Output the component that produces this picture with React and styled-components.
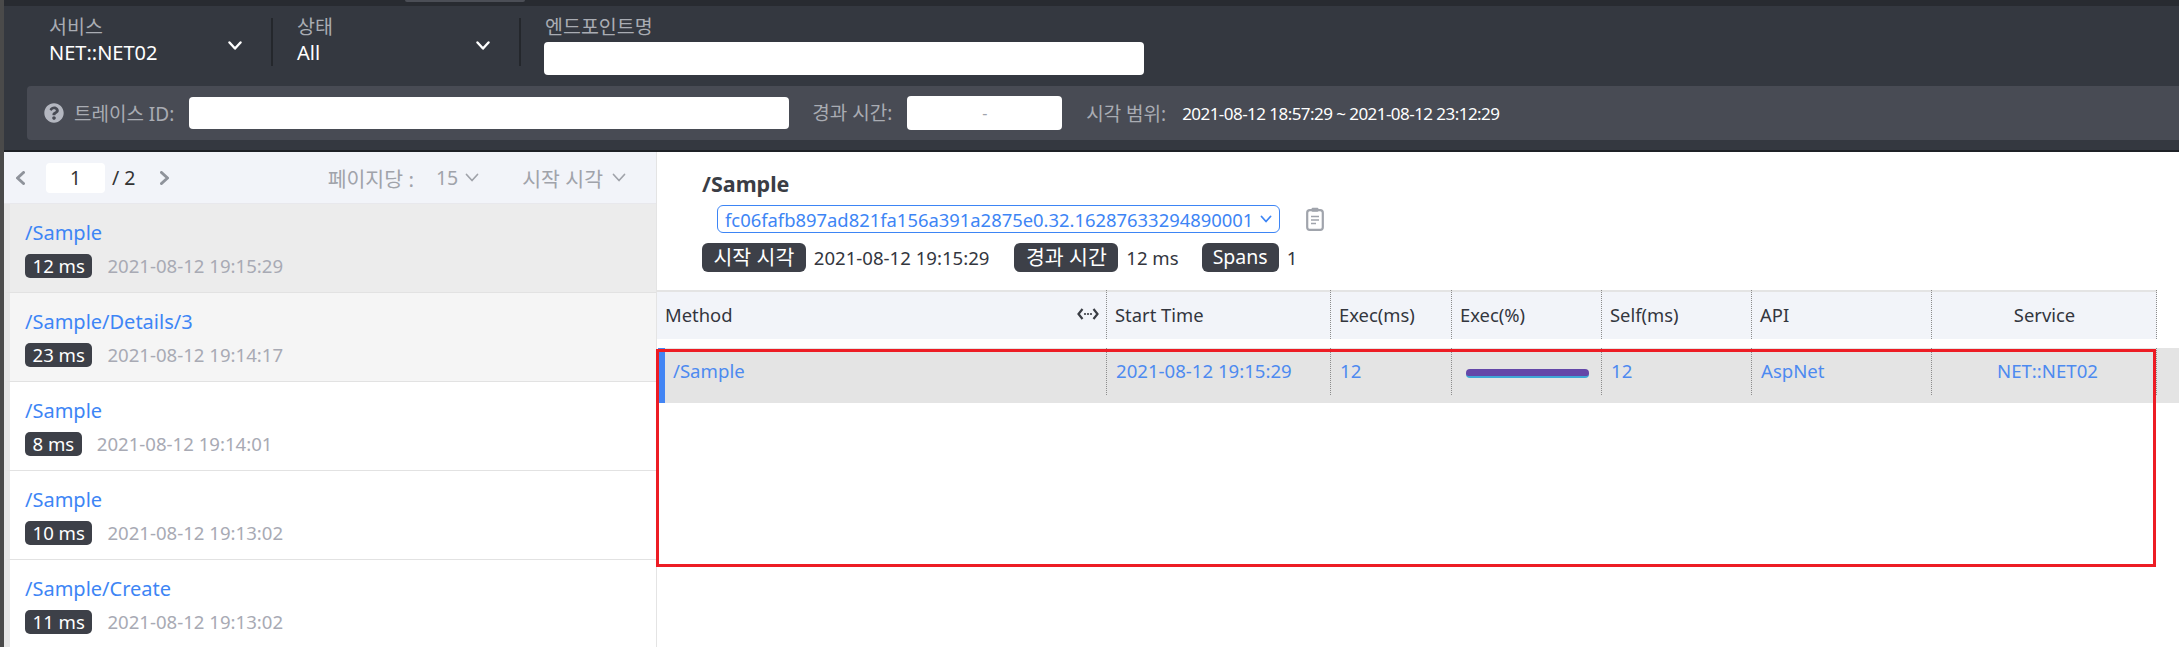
import React from 'react';
import styled, { createGlobalStyle } from 'styled-components';
import { FaQuestionCircle } from 'react-icons/fa';

const GlobalStyle = createGlobalStyle`
  * { box-sizing: border-box; }
  body {
    margin: 0;
    background: #fff;
    font-family: "Noto Sans", "Noto Sans CJK KR", sans-serif;
  }
`;

const traces = [
  { path: '/Sample', ms: '12 ms', time: '2021-08-12 19:15:29', tone: 'active' },
  { path: '/Sample/Details/3', ms: '23 ms', time: '2021-08-12 19:14:17', tone: 'hover' },
  { path: '/Sample', ms: '8 ms', time: '2021-08-12 19:14:01' },
  { path: '/Sample', ms: '10 ms', time: '2021-08-12 19:13:02' },
  { path: '/Sample/Create', ms: '11 ms', time: '2021-08-12 19:13:02' },
];

const Chevron = ({ dir = 'down', w = 14, h = 9, weight = 2.4, color = 'currentColor' }) => {
  const points = {
    down: `1.5,1.5 ${w / 2},${h - 1.5} ${w - 1.5},1.5`,
    left: `${w - 1.5},1.5 1.5,${h / 2} ${w - 1.5},${h - 1.5}`,
    right: `1.5,1.5 ${w - 1.5},${h / 2} 1.5,${h - 1.5}`,
  }[dir];
  return (
    <svg width={w} height={h} viewBox={`0 0 ${w} ${h}`} fill="none">
      <polyline points={points} stroke={color} strokeWidth={weight} strokeLinecap="round" strokeLinejoin="round" />
    </svg>
  );
};

const ClipboardIcon = () => (
  <svg width="18" height="24" viewBox="0 0 18 24" fill="none">
    <rect x="1.2" y="3.2" width="15.6" height="19.6" rx="2.6" stroke="#a0a4ac" strokeWidth="2.2" />
    <rect x="5.5" y="0.8" width="7" height="4" rx="1.2" fill="#a0a4ac" />
    <path d="M5 9.5h8M5 13h8M5 16.5h5" stroke="#a0a4ac" strokeWidth="1.5" />
  </svg>
);

const ResizeIcon = () => (
  <svg width="22" height="14" viewBox="0 0 22 14" fill="none">
    <polyline points="5.5,2 1.5,7 5.5,12" stroke="#3a3d44" strokeWidth="2.2" />
    <polyline points="16.5,2 20.5,7 16.5,12" stroke="#3a3d44" strokeWidth="2.2" />
    <circle cx="8" cy="7" r="1.1" fill="#3a3d44" />
    <circle cx="11" cy="7" r="1.1" fill="#3a3d44" />
    <circle cx="14" cy="7" r="1.1" fill="#3a3d44" />
  </svg>
);

const App = () => (
  <>
    <GlobalStyle />
    <Page>
      <TopStrip><TopTab /></TopStrip>
      <Header>
        <FilterRow>
          <SelectField>
            <div>
              <FieldLabel>서비스</FieldLabel>
              <FieldValue>NET::NET02</FieldValue>
            </div>
            <Chevron />
          </SelectField>
          <SelectField>
            <div>
              <FieldLabel>상태</FieldLabel>
              <FieldValue>All</FieldValue>
            </div>
            <Chevron />
          </SelectField>
          <EndpointField>
            <EndpointLabel>엔드포인트명</EndpointLabel>
            <EndpointInput />
          </EndpointField>
        </FilterRow>
        <Toolbar>
          <HelpIcon><FaQuestionCircle size={20} /></HelpIcon>
          <ToolLabel $gap={10}>트레이스 ID:</ToolLabel>
          <TraceInput />
          <ToolLabel $gap={23} $raised>경과 시간:</ToolLabel>
          <ElapsedInput>-</ElapsedInput>
          <ToolLabel $gap={24}>시각 범위:</ToolLabel>
          <RangeValue>2021-08-12 18:57:29 ~ 2021-08-12 23:12:29</RangeValue>
        </Toolbar>
      </Header>
      <Body>
        <ListPane>
          <ListToolbar>
            <PageNav>
              <Chevron dir="left" w={9} h={14} weight={3} color="#8f939b" />
              <PageInput>1</PageInput>
              <PageTotal>/ 2</PageTotal>
              <Chevron dir="right" w={9} h={14} weight={3} color="#8f939b" />
            </PageNav>
            <SortGroup>
              <SortText>페이지당 :</SortText>
              <SortCount>15</SortCount>
              <Chevron w={14} h={9} weight={1.7} />
              <SortName>시작 시각</SortName>
              <Chevron w={14} h={9} weight={1.7} />
            </SortGroup>
          </ListToolbar>
          {traces.map((trace, i) => (
            <TraceItem key={i} $tone={trace.tone}>
              <TraceLink>{trace.path}</TraceLink>
              <TraceMeta>
                <MsBadge>{trace.ms}</MsBadge>
                <TraceTime>{trace.time}</TraceTime>
              </TraceMeta>
            </TraceItem>
          ))}
        </ListPane>
        <DetailPane>
          <DetailHead>
            <DetailTitle>/Sample</DetailTitle>
            <TraceRow>
              <TraceSelect>
                <span>fc06fafb897ad821fa156a391a2875e0.32.16287633294890001</span>
                <Chevron w={12} h={8} weight={1.8} />
              </TraceSelect>
              <ClipboardIcon />
            </TraceRow>
            <MetaRow>
              <MetaBadge $size={20.5} $pad={11.5}>시작 시각</MetaBadge>
              <MetaValue $gap={25}>2021-08-12 19:15:29</MetaValue>
              <MetaBadge $size={20.5} $pad={11.5}>경과 시간</MetaBadge>
              <MetaValue $gap={23}>12 ms</MetaValue>
              <MetaBadge>Spans</MetaBadge>
              <MetaValue>1</MetaValue>
            </MetaRow>
          </DetailHead>
          <HeadRow>
            <HeadCell>Method<ResizeHandle><ResizeIcon /></ResizeHandle></HeadCell>
            <HeadCell>Start Time</HeadCell>
            <HeadCell>Exec(ms)</HeadCell>
            <HeadCell>Exec(%)</HeadCell>
            <HeadCell>Self(ms)</HeadCell>
            <HeadCell>API</HeadCell>
            <HeadCell $center>Service</HeadCell>
          </HeadRow>
          <DataRow>
            <DataGrid>
              <DataCell $pad={7}>/Sample</DataCell>
              <DataCell $pad={9}>2021-08-12 19:15:29</DataCell>
              <DataCell $pad={9}>12</DataCell>
              <DataCell $pad={14}>
                <ExecBar />
              </DataCell>
              <DataCell $pad={9}>12</DataCell>
              <DataCell $pad={9}>AspNet</DataCell>
              <DataCell $center>NET::NET02</DataCell>
            </DataGrid>
          </DataRow>
          <Highlight />
        </DetailPane>
      </Body>
    </Page>
  </>
);

const Page = styled.div`
  width: 2179px;
  height: 647px;
  overflow: hidden;
  border-left: 4px solid #4a4a4a;
  background: #fff;
`;

const TopStrip = styled.div`
  height: 6px;
  background: #282b31;
`;

const TopTab = styled.div`
  width: 120px;
  height: 2px;
  margin-left: 401px;
  background: #4b4e56;
  border-radius: 0 0 3px 3px;
`;

const Header = styled.div`
  height: 146px;
  padding-top: 12px;
  background: #343840;
  border-bottom: 2px solid #1e2126;
`;

const FilterRow = styled.div`
  display: flex;
  height: 48px;
  padding-left: 45px;
`;

const SelectField = styled.div`
  display: flex;
  justify-content: space-between;
  align-items: flex-start;
  width: 248px;
  padding-right: 55px;
  color: #fff;
  position: relative;
  svg { margin-top: 23px; }
  &::after {
    content: '';
    position: absolute;
    right: 24px;
    top: 0;
    width: 2px;
    height: 48px;
    background: #24272c;
  }
`;

const FieldLabel = styled.div`
  font-size: 19.5px;
  line-height: 18px;
  color: #a9acb3;
`;

const FieldValue = styled.div`
  margin-top: 4px;
  font-size: 20px;
  line-height: 25px;
  color: #fff;
`;

const EndpointField = styled.div`
  width: 600px;
  margin-left: -1px;
`;

const EndpointLabel = styled(FieldLabel)`
  margin-left: 1px;
`;

const EndpointInput = styled.div`
  height: 33px;
  margin-top: 6px;
  background: #fff;
  border-radius: 4px;
`;

const Toolbar = styled.div`
  display: flex;
  align-items: center;
  height: 54px;
  margin: 20px 0 0 23px;
  padding-left: 17px;
  background: #484b54;
  border-radius: 4px 0 0 4px;
`;

const HelpIcon = styled.span`
  display: flex;
  color: #b4b7c0;
`;

const ToolLabel = styled.span`
  margin-left: ${({ $gap }) => $gap}px;
  font-size: 19px;
  color: #a9acb3;
  white-space: nowrap;
  position: relative;
  top: ${({ $raised }) => ($raised ? -1 : 0)}px;
`;

const TraceInput = styled.div`
  width: 600px;
  height: 32px;
  margin-left: 15px;
  background: #fff;
  border-radius: 4px;
`;

const ElapsedInput = styled.div`
  width: 155px;
  height: 34px;
  margin-left: 15px;
  background: #fff;
  border-radius: 4px;
  font-size: 16px;
  line-height: 34px;
  text-align: center;
  color: #a0a4ac;
`;

const RangeValue = styled.span`
  margin-left: 16px;
  font-size: 17px;
  letter-spacing: -0.55px;
  color: #fff;
  white-space: nowrap;
`;

const Body = styled.div`
  display: flex;
  height: 495px;
`;

const ListPane = styled.div`
  flex: none;
  width: 653px;
  overflow: hidden;
  border-right: 1px solid #e4e4e4;
`;

const ListToolbar = styled.div`
  display: flex;
  justify-content: space-between;
  align-items: center;
  height: 52px;
  padding: 0 30px 0 12px;
  background: #f2f4f9;
  border-bottom: 1px solid #e8e8ec;
`;

const PageNav = styled.div`
  display: flex;
  align-items: center;
`;

const PageInput = styled.div`
  width: 59px;
  height: 30px;
  margin: 0 7px 0 21px;
  background: #fff;
  border-radius: 4px;
  font-size: 19px;
  line-height: 30px;
  text-align: center;
  color: #333;
`;

const PageTotal = styled.span`
  width: 48px;
  font-size: 19.5px;
  color: #333;
`;

const SortGroup = styled.div`
  display: flex;
  align-items: center;
  color: #a0a3aa;
  font-size: 20.5px;
`;

const SortText = styled.span`
  margin-right: 22px;
`;

const SortCount = styled.span`
  margin-right: 7px;
  font-size: 19.5px;
`;

const SortName = styled.span`
  margin: 0 9px 0 43px;
`;

const toneColors = { active: '#ececec', hover: '#f5f5f5' };

const TraceItem = styled.div`
  height: 89px;
  padding: 16px 0 0 15px;
  background: ${({ $tone }) => toneColors[$tone] || '#fff'};
  border-left: 6px solid #e6e6e6;
  border-bottom: 1px solid #e2e2e2;
`;

const TraceLink = styled.div`
  font-size: 20px;
  line-height: 26px;
  color: #3d85f5;
`;

const TraceMeta = styled.div`
  display: flex;
  align-items: center;
  margin-top: 7px;
`;

const MsBadge = styled.span`
  height: 24px;
  padding: 0 7.5px;
  background: #3d4048;
  border-radius: 5px;
  font-size: 18.6px;
  line-height: 24px;
  color: #fff;
`;

const TraceTime = styled.span`
  margin-left: 15px;
  font-size: 18.6px;
  color: #a8aab4;
`;

const DetailPane = styled.div`
  flex: 1;
  position: relative;
`;

const DetailHead = styled.div`
  height: 138px;
  padding: 17px 0 0 45px;
`;

const DetailTitle = styled.div`
  font-size: 21.5px;
  font-weight: 700;
  line-height: 30px;
  color: #3a3d45;
`;

const TraceRow = styled.div`
  display: flex;
  align-items: center;
  gap: 26px;
  margin: 6px 0 0 15px;
`;

const TraceSelect = styled.div`
  display: flex;
  justify-content: space-between;
  align-items: center;
  width: 563px;
  height: 28px;
  padding: 0 7px;
  border: 1px solid #3d85f5;
  border-radius: 6px;
  font-size: 18.4px;
  color: #3d85f5;
  white-space: nowrap;
`;

const MetaRow = styled.div`
  display: flex;
  align-items: center;
  margin-top: 10px;
`;

const MetaBadge = styled.span`
  height: 29px;
  padding: 0 ${({ $pad }) => $pad || 11}px;
  background: #3d4048;
  border-radius: 6px;
  font-size: ${({ $size }) => $size || 19.5}px;
  line-height: 28px;
  color: #fff;
`;

const MetaValue = styled.span`
  margin: 0 ${({ $gap }) => $gap || 0}px 0 8px;
  font-size: 18.6px;
  color: #33363e;
`;

const HeadRow = styled.div`
  display: grid;
  grid-template-columns: 450px 224px 121px 150px 150px 180px 225px;
  height: 49px;
  background: linear-gradient(#e4e4e4 2px, #f2f4f9 2px);
  width: 1500px;
`;

const HeadCell = styled.div`
  display: flex;
  align-items: center;
  justify-content: ${({ $center }) => ($center ? 'center' : 'space-between')};
  padding: 0 7px 1px 8px;
  border-right: 1px dotted #8c8c8c;
  font-size: 18.4px;
  color: #33363e;
`;

const ResizeHandle = styled.span`
  display: flex;
`;

const DataRow = styled.div`
  height: 55px;
  margin-top: 9px;
  padding-left: 8px;
  background: linear-gradient(90deg, #4285f4 7px, #e4e4e4 7px);
  margin-left: 1px;
`;

const DataGrid = styled.div`
  display: grid;
  grid-template-columns: 441px 224px 121px 150px 150px 180px 225px;
  height: 47px;
`;

const DataCell = styled.div`
  display: flex;
  align-items: center;
  justify-content: ${({ $center }) => ($center ? 'center' : 'flex-start')};
  padding: 0 ${({ $center }) => ($center ? 3 : 0)}px 2px ${({ $pad }) => $pad ?? 10}px;
  border-right: 1px dotted #8c8c8c;
  font-size: 18.6px;
  color: #4d8af0;
`;

const ExecBar = styled.div`
  width: 123px;
  height: 9px;
  margin-top: 6px;
  background: #6447a8;
  border-radius: 4px;
  border-bottom: 2px solid #3fa7d6;
`;

const Highlight = styled.div`
  position: absolute;
  left: -1px;
  top: 197px;
  width: 1500px;
  height: 218px;
  border: 3px solid #ed1c24;
  pointer-events: none;
`;

export default App;
